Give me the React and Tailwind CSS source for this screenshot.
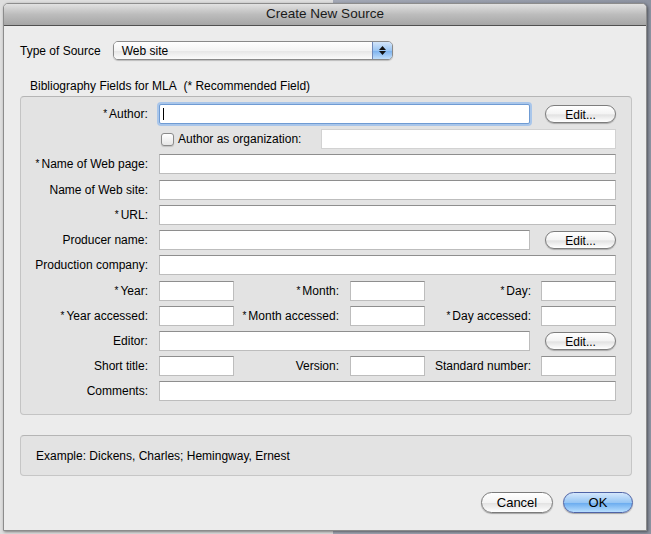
import React from "react";

const FONT = { fontFamily: '"Liberation Sans", Arial, sans-serif' };

// ── Small pieces ──────────────────────────────────────────────────────────
function Field({ className = "", focused = false, disabled = false }) {
  if (focused) {
    return (
      <div
        className={`h-[20px] bg-white border border-[#6f9bd3] rounded-[2px] shadow-[0_0_0_2px_#a9c6ea] flex items-center pl-[3px] ${className}`}
      >
        <span className="w-px h-[12px] bg-black" />
      </div>
    );
  }
  if (disabled) {
    return (
      <div className={`h-[20px] bg-white border border-[#d2d2d2] ${className}`} />
    );
  }
  return (
    <div
      className={`h-[20px] bg-white border border-[#bdbdbd] border-t-[#8e8e8e] ${className}`}
    />
  );
}

function Label({ children, req = false, className = "" }) {
  return (
    <div className={`text-right whitespace-nowrap ${className}`}>
      {req && <span className="text-[10px] mr-[2px] relative top-[-1px]">*</span>}
      {children}
    </div>
  );
}

function PillButton({ children, className = "" }) {
  return (
    <button
      className={`h-[18px] rounded-full border border-[#7d7d7d] bg-[linear-gradient(to_bottom,#ffffff,#f3f3f3_50%,#e2e2e2_55%,#ffffff)] shadow-[0_1px_1px_rgba(0,0,0,0.25)] text-[12px] text-black ${className}`}
    >
      {children}
    </button>
  );
}

// ── Rows ─────────────────────────────────────────────────────────────────
const LABEL_W = "w-[138px] pr-[11px]";

function FullRow({ label, req }) {
  return (
    <div className="flex items-center h-[20px]">
      <Label req={req} className={LABEL_W}>{label}</Label>
      <Field className="flex-1" />
    </div>
  );
}

function EditRow({ label, req, focused }) {
  return (
    <div className="flex items-center h-[20px]">
      <Label req={req} className={LABEL_W}>{label}</Label>
      <Field className="w-[372px]" focused={focused} />
      <PillButton className="ml-[15px] w-[71px]">Edit...</PillButton>
    </div>
  );
}

function TripleRow({ items }) {
  const [a, b, c] = items;
  return (
    <div className="flex items-center h-[20px]">
      <Label req={a.req} className={LABEL_W}>{a.label}</Label>
      <Field className="w-[75px]" />
      <Label req={b.req} className="w-[116px] pr-[11px]">{b.label}</Label>
      <Field className="w-[75px]" />
      <Label req={c.req} className="w-[116px] pr-[10px]">{c.label}</Label>
      <Field className="w-[75px]" />
    </div>
  );
}

export default function App() {
  return (
    <div
      className="w-[651px] h-[534px] overflow-hidden pl-[3px] pt-[3px] bg-[linear-gradient(to_right,#dedede_0,#dedede_333px,#a3a8b5_333px,#8d93a1)] text-[12px] text-black"
      style={FONT}
    >
      <div className="w-[644px] h-[528px] flex flex-col bg-[#ececec] border border-[#8c8c8c] rounded-t-[5px] shadow-[1px_1px_3px_rgba(0,0,0,0.45)]">
        {/* Title bar */}
        <div className="h-[22px] shrink-0 flex items-center justify-center rounded-t-[4px] border-b border-[#505050] bg-[linear-gradient(to_bottom,#e1e1e1,#bcbcbc_50%,#a6a6a6)] text-[13.5px] text-[#1a1a1a]">
          Create New Source
        </div>

        {/* Type of Source */}
        <div className="flex items-center mt-[15px] pl-[16px] h-[19px]">
          <span>Type of Source</span>
          <div className="ml-[12px] w-[280px] h-[19px] flex rounded-[5px] border border-[#8a8a8a] overflow-hidden shadow-[0_1px_1px_rgba(0,0,0,0.2)]">
            <div className="flex-1 flex items-center pl-[8px] bg-[linear-gradient(to_bottom,#ffffff,#f4f4f4_50%,#e7e7e7_55%,#fbfbfb)]">
              Web site
            </div>
            <div className="w-[20px] flex flex-col items-center justify-center gap-[1px] border-l border-[#6f88b8] bg-[linear-gradient(to_bottom,#d3e5fa,#9cc6f3_50%,#7fb3ee_55%,#c0defb)]">
              <svg width="7" height="4" viewBox="0 0 7 4"><path d="M3.5 0 L7 4 L0 4 Z" fill="#111" /></svg>
              <svg width="7" height="4" viewBox="0 0 7 4"><path d="M0 0 L7 0 L3.5 4 Z" fill="#111" /></svg>
            </div>
          </div>
        </div>

        {/* Bibliography group */}
        <div className="mt-[17px] pl-[26px]">Bibliography Fields for MLA&nbsp;&nbsp;(* Recommended Field)</div>
        <div className="mt-[1px] ml-[16px] w-[612px] h-[319px] rounded-[4px] border border-[#c4c4c4] border-t-[#b5b5b5] bg-[#e3e3e3] pt-[7px] pr-[15px] flex flex-col gap-[5.22px]">
          <EditRow label="Author:" req focused />
          <div className="flex items-center h-[20px]">
            <div className="w-[138px]" />
            <div className="ml-[2px] w-[13px] h-[13px] rounded-[3px] border border-[#8a8a8a] bg-[linear-gradient(to_bottom,#ffffff,#e6e6e6)] shadow-[0_1px_1px_rgba(0,0,0,0.15)]" />
            <span className="ml-[4px] w-[143px]">Author as organization:</span>
            <Field className="flex-1" disabled />
          </div>
          <FullRow label="Name of Web page:" req />
          <FullRow label="Name of Web site:" />
          <FullRow label="URL:" req />
          <EditRow label="Producer name:" />
          <FullRow label="Production company:" />
          <TripleRow
            items={[
              { label: "Year:", req: true },
              { label: "Month:", req: true },
              { label: "Day:", req: true },
            ]}
          />
          <TripleRow
            items={[
              { label: "Year accessed:", req: true },
              { label: "Month accessed:", req: true },
              { label: "Day accessed:", req: true },
            ]}
          />
          <EditRow label="Editor:" />
          <TripleRow
            items={[
              { label: "Short title:" },
              { label: "Version:" },
              { label: "Standard number:" },
            ]}
          />
          <FullRow label="Comments:" />
        </div>

        {/* Example box */}
        <div className="mt-[20px] ml-[16px] w-[612px] h-[41px] rounded-[4px] border border-[#c6c6c6] border-t-[#b5b5b5] bg-[#e3e3e3] flex items-center pl-[15px]">
          Example: Dickens, Charles; Hemingway, Ernest
        </div>

        {/* Footer buttons */}
        <div className="mt-[16px] flex justify-end pr-[13px] gap-[10px]">
          <button className="w-[72px] h-[21px] rounded-full border border-[#7b7b7b] bg-[linear-gradient(to_bottom,#ffffff,#f3f3f3_50%,#e3e3e3_55%,#ffffff)] shadow-[0_1px_1px_rgba(0,0,0,0.3)] text-[13px]">
            Cancel
          </button>
          <button className="w-[70px] h-[21px] rounded-full border border-[#4f63a6] bg-[linear-gradient(to_bottom,#d4e7fc,#97c6f4_50%,#6eaef0_55%,#b7defe)] shadow-[0_1px_1px_rgba(0,0,0,0.3)] text-[13px]">
            OK
          </button>
        </div>
      </div>
    </div>
  );
}
